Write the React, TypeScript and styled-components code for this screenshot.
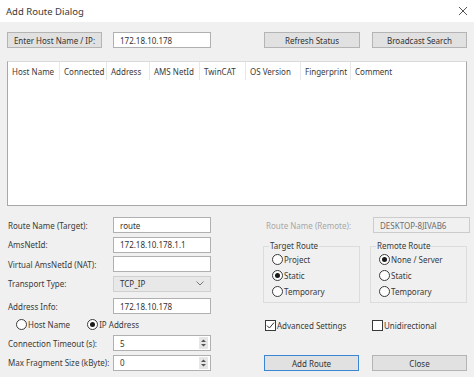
import React from 'react';
import styled, { createGlobalStyle } from 'styled-components';

const GlobalStyle = createGlobalStyle`
  body {
    margin: 0;
    background: #f0f0f0;
    font-family: "Noto Sans", "Open Sans", sans-serif;
    font-size: 8px;
    color: #333;
  }
  * { box-sizing: border-box; }
`;

const columns = [
    { name: 'Host Name', width: 52 },
    { name: 'Connected', width: 47 },
    { name: 'Address', width: 43 },
    { name: 'AMS NetId', width: 50 },
    { name: 'TwinCAT', width: 46 },
    { name: 'OS Version', width: 55 },
    { name: 'Fingerprint', width: 50 },
    { name: 'Comment', width: 0 },
];

const Radio = ({ checked, label }: { checked?: boolean; label: string }) => (
    <RadioItem>
        <RadioCircle checked={checked} />
        <ItemLabel>{label}</ItemLabel>
    </RadioItem>
);

const Check = ({ checked, label }: { checked?: boolean; label: string }) => (
    <RadioItem>
        <CheckBox>
            {checked && (
                <svg width="9" height="9" viewBox="0 0 9 9">
                    <path d="M1 4.6 L3.4 7 L8 1.6" fill="none" stroke="#333" strokeWidth="1" />
                </svg>
            )}
        </CheckBox>
        <ItemLabel>{label}</ItemLabel>
    </RadioItem>
);

const Spin = ({ value }: { value: string }) => (
    <SpinBox>
        <SpinValue>{value}</SpinValue>
        <SpinArrows>
            <svg width="7" height="10" viewBox="0 0 7 10">
                <path d="M1 4 L3.5 1.5 L6 4 Z" fill="#555" />
                <path d="M1 6 L3.5 8.5 L6 6 Z" fill="#555" />
            </svg>
        </SpinArrows>
    </SpinBox>
);

const App = () => {
    return (
        <Window>
            <GlobalStyle />
            <TitleBar>
                <span>Add Route Dialog</span>
                <svg width="10" height="10" viewBox="0 0 10 10">
                    <path d="M1 1 L9 9 M9 1 L1 9" stroke="#555" strokeWidth="1" />
                </svg>
            </TitleBar>
            <Body>
                <TopRow>
                    <Button $w={95}>Enter Host Name / IP:</Button>
                    <TextBox $w={98} $gap={11}>172.18.10.178</TextBox>
                    <TopRight>
                        <Button $w={96}>Refresh Status</Button>
                        <Button $w={95}>Broadcast Search</Button>
                    </TopRight>
                </TopRow>

                <ListBox>
                    <ListHeader>
                        {columns.map((c) => (
                            <HeaderCell key={c.name} $w={c.width}>{c.name}</HeaderCell>
                        ))}
                    </ListHeader>
                </ListBox>

                <Lower>
                    <LeftCol>
                        <FormRow>
                            <Label>Route Name (Target):</Label>
                            <TextBox>route</TextBox>
                        </FormRow>
                        <FormRow>
                            <Label>AmsNetId:</Label>
                            <TextBox>172.18.10.178.1.1</TextBox>
                        </FormRow>
                        <FormRow>
                            <Label>Virtual AmsNetId (NAT):</Label>
                            <TextBox />
                        </FormRow>
                        <FormRow>
                            <Label>Transport Type:</Label>
                            <Select>
                                <span>TCP_IP</span>
                                <svg width="8" height="5" viewBox="0 0 8 5">
                                    <path d="M0.5 0.5 L4 4 L7.5 0.5" fill="none" stroke="#777" strokeWidth="1" />
                                </svg>
                            </Select>
                        </FormRow>
                        <FormRow $top={3}>
                            <Label>Address Info:</Label>
                            <TextBox>172.18.10.178</TextBox>
                        </FormRow>
                        <RadioRow>
                            <Radio label="Host Name" />
                            <Radio label="IP Address" checked />
                        </RadioRow>
                        <FormRow>
                            <Label>Connection Timeout (s):</Label>
                            <Spin value="5" />
                        </FormRow>
                        <FormRow>
                            <Label>Max Fragment Size (kByte):</Label>
                            <Spin value="0" />
                        </FormRow>
                    </LeftCol>

                    <RightCol>
                        <RemoteRow>
                            <Label $disabled>Route Name (Remote):</Label>
                            <TextBox $disabled $w={97}>DESKTOP-8JIVAB6</TextBox>
                        </RemoteRow>
                        <Pair>
                            <Group>
                                <Legend>Target Route</Legend>
                                <Radio label="Project" />
                                <Radio label="Static" checked />
                                <Radio label="Temporary" />
                            </Group>
                            <Group>
                                <Legend>Remote Route</Legend>
                                <Radio label="None / Server" checked />
                                <Radio label="Static" />
                                <Radio label="Temporary" />
                            </Group>
                        </Pair>
                        <CheckRow>
                            <Check label="Advanced Settings" checked />
                            <Check label="Unidirectional" />
                        </CheckRow>
                        <ButtonRow>
                            <Button $primary>Add Route</Button>
                            <Button>Close</Button>
                        </ButtonRow>
                    </RightCol>
                </Lower>
            </Body>
        </Window>
    );
};

const Window = styled.div`
    width: 474px;
    height: 377px;
    background: #f0f0f0;
    overflow: hidden;
`;

const TitleBar = styled.div`
    height: 22px;
    background: #fff;
    display: flex;
    align-items: center;
    justify-content: space-between;
    padding: 0 6px 0 6px;
    font-size: 9.5px;
    color: #3a3a3a;
`;

const Body = styled.div`
    padding: 10px 7px 0 7px;
`;

const TopRow = styled.div`
    display: flex;
    align-items: center;
    height: 16px;
`;

const TopRight = styled.div`
    margin-left: auto;
    display: flex;
    gap: 12px;
`;

const Button = styled.div<{ $w?: number; $primary?: boolean }>`
    width: ${(p) => (p.$w ? `${p.$w}px` : 'auto')};
    height: 16px;
    display: flex;
    align-items: center;
    justify-content: center;
    background: #e1e1e1;
    border: 1px solid ${(p) => (p.$primary ? '#3a86d4' : '#b4b4b4')};
    color: #333;
    white-space: nowrap;
`;

const TextBox = styled.div<{ $w?: number; $disabled?: boolean; $gap?: number }>`
    width: ${(p) => (p.$w ? `${p.$w}px` : '98px')};
    margin-left: ${(p) => p.$gap || 0}px;
    height: 16px;
    display: flex;
    align-items: center;
    padding-left: 6px;
    background: ${(p) => (p.$disabled ? '#f0f0f0' : '#fff')};
    border: 1px solid ${(p) => (p.$disabled ? '#cccccc' : '#b0b0b0')};
    color: ${(p) => (p.$disabled ? '#6d6d6d' : '#333')};
    white-space: nowrap;
`;

const ListBox = styled.div`
    margin-top: 13px;
    height: 145px;
    background: #fff;
    border: 1px solid #a8a8a8;
    border-top-color: #dadada;
`;

const ListHeader = styled.div`
    display: flex;
    height: 18px;
`;

const HeaderCell = styled.div<{ $w: number }>`
    ${(p) => (p.$w ? `width: ${p.$w}px;` : 'flex: 1;')}
    padding-left: 4px;
    display: flex;
    align-items: center;
    border-right: ${(p) => (p.$w ? '1px solid #e8e8e8' : 'none')};
    color: #3a3a3a;
    white-space: nowrap;
`;

const Lower = styled.div`
    margin-top: 11px;
    display: grid;
    grid-template-columns: 204px 204px;
    column-gap: 52px;
`;

const LeftCol = styled.div`
    display: flex;
    flex-direction: column;
    gap: 3.5px;
    padding-left: 1px;
`;

const FormRow = styled.div<{ $top?: number }>`
    display: grid;
    grid-template-columns: 105px 98px;
    align-items: center;
    height: 16px;
    margin-top: ${(p) => p.$top || 0}px;
`;

const Label = styled.span<{ $disabled?: boolean }>`
    color: ${(p) => (p.$disabled ? '#a8a8a8' : '#3a3a3a')};
    white-space: nowrap;
`;

const Select = styled.div`
    height: 16px;
    display: flex;
    align-items: center;
    justify-content: space-between;
    padding: 0 6px;
    background: #e8e8e8;
    border: 1px solid #d0d0d0;
`;

const RadioRow = styled.div`
    display: flex;
    align-items: center;
    gap: 17px;
    height: 14px;
    padding-left: 8px;
`;

const RadioItem = styled.div`
    display: flex;
    align-items: center;
    height: 16px;
    gap: 1px;
`;

const RadioCircle = styled.span<{ checked?: boolean }>`
    width: 11px;
    height: 11px;
    border-radius: 50%;
    border: 1px solid #3a3a3a;
    background: #fff;
    display: flex;
    align-items: center;
    justify-content: center;
    &::after {
        content: '';
        display: ${(p) => (p.checked ? 'block' : 'none')};
        width: 5px;
        height: 5px;
        border-radius: 50%;
        background: #1a1a1a;
    }
`;

const CheckBox = styled.span`
    width: 11px;
    height: 11px;
    border: 1px solid #3a3a3a;
    background: #fff;
    display: flex;
    align-items: center;
    justify-content: center;
`;

const ItemLabel = styled.span`
    color: #3a3a3a;
    white-space: nowrap;
`;

const SpinBox = styled.div`
    height: 16px;
    display: flex;
    align-items: center;
    justify-content: space-between;
    padding-left: 6px;
    background: #fff;
    border: 1px solid #b0b0b0;
`;

const SpinValue = styled.span``;

const SpinArrows = styled.span`
    width: 9px;
    height: 12px;
    margin-right: 2px;
    background: #e6e6e6;
    display: flex;
    align-items: center;
    justify-content: center;
`;

const RightCol = styled.div`
    display: flex;
    flex-direction: column;
`;

const RemoteRow = styled.div`
    display: grid;
    grid-template-columns: 107px 97px;
    align-items: center;
    height: 16px;
    padding-left: 3px;
`;

const Pair = styled.div`
    margin-top: 8px;
    display: grid;
    grid-template-columns: 97px 97px;
    column-gap: 10px;
`;

const Group = styled.fieldset`
    margin: 0;
    height: 62px;
    padding: 0 0 0 8px;
    border: 1px solid #dcdcdc;
    display: flex;
    flex-direction: column;
`;

const Legend = styled.legend`
    padding: 0 1px;
    margin-left: -3px;
    color: #3a3a3a;
    line-height: 10px;
`;

const CheckRow = styled.div`
    margin-top: 14px;
    display: grid;
    grid-template-columns: 97px 97px;
    column-gap: 10px;
    padding-left: 2px;
`;

const ButtonRow = styled.div`
    margin-top: 22px;
    display: grid;
    grid-template-columns: 95px 95px;
    column-gap: 13px;
    padding-left: 1px;
`;

export default App;
